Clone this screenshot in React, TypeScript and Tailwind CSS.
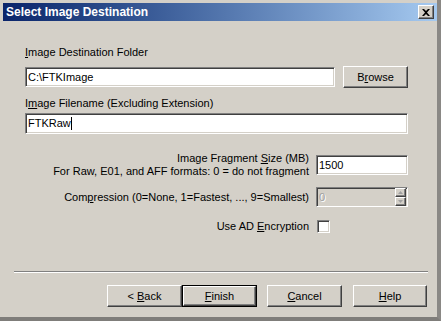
import React from 'react';

const sunken =
  'border border-t-[#808080] border-l-[#808080] border-r-white border-b-white shadow-[inset_1px_1px_0_#404040,inset_-1px_-1px_0_#d4d0c8]';

const raised =
  'border border-t-white border-l-white border-r-[#404040] border-b-[#404040] shadow-[inset_-1px_-1px_0_#808080]';

const U: React.FC<{ children: React.ReactNode }> = ({ children }) => (
  <span className="underline underline-offset-[1px]">{children}</span>
);

const WinButton: React.FC<{ children: React.ReactNode; isDefault?: boolean; w?: string }> = ({ children, isDefault, w = 'w-[75px]' }) => (
  <div className={`${w} h-[22px] ${isDefault ? 'border border-black' : ''} flex`}>
    <div className={`flex-1 ${raised} bg-[#d4d0c8] flex items-center justify-center text-black`}>
      <span className="whitespace-pre">{children}</span>
    </div>
  </div>
);

export default function App() {
  return (
    <div className="w-[441px] h-[321px] overflow-hidden bg-[#d4d0c8] border-r-[4px] border-b-[4px] border-r-[#8a8885] border-b-[#7f7d7a] flex flex-col font-['Liberation_Sans',Arial,sans-serif] text-[11px] leading-[13px] text-black">
      {/* Title bar */}
      <div className="mt-[3px] ml-[3px] h-[18px] flex items-center justify-between bg-gradient-to-r from-[#0a246a] to-[#a6caf0]">
        <span className="pl-[3px] font-bold text-white text-[12px]">Select Image Destination</span>
        <div className={`mr-[3px] w-[16px] h-[14px] ${raised} bg-[#d4d0c8] flex items-center justify-center`}>
          <svg width="8" height="7" viewBox="0 0 8 7">
            <path d="M0 0h2l2 2 2-2h2L5 3.5 8 7H6L4 5 2 7H0l3-3.5z" fill="#000" />
          </svg>
        </div>
      </div>

      {/* Body */}
      <div className="flex flex-col pl-[25px] pr-[29px]">
        <div className="mt-[25px]">
          <U>I</U>mage Destination Folder
        </div>
        <div className="mt-[7px] flex items-center">
          <div className={`w-[311px] h-[20px] bg-white ${sunken} flex items-center pl-[2px]`}>C:\FTKImage</div>
          <div className="ml-[8px]">
            <WinButton w="w-[65px]">
              B<U>r</U>owse
            </WinButton>
          </div>
        </div>
        <div className="mt-[9px]">
          I<U>m</U>age Filename (Excluding Extension)
        </div>
        <div className={`mt-[3px] h-[21px] bg-white ${sunken} flex items-center pl-[2px]`}>
          FTKRaw<span className="w-px h-[13px] bg-black" />
        </div>

        <div className="mt-[18px] flex items-start">
          <div className="flex-1 text-right">
            <div>
              Image Fragment <U>S</U>ize (MB)
            </div>
            <div>For Raw, E01, and AFF formats: 0 = do not fragment</div>
          </div>
          <div className={`ml-[7px] mt-[3px] w-[92px] h-[20px] bg-white ${sunken} flex items-center pl-[2px]`}>1500</div>
        </div>

        <div className="mt-[9px] flex items-center">
          <div className="flex-1 text-right">
            Com<U>p</U>ression (0=None, 1=Fastest, ..., 9=Smallest)
          </div>
          <div className={`ml-[7px] w-[92px] h-[20px] bg-[#d4d0c8] ${sunken} flex items-center justify-between pl-[2px] pr-[1px]`}>
            <span className="text-[#a0a0a0] [text-shadow:1px_1px_0_#fff]">0</span>
            <div className="flex flex-col w-[11px] h-[18px]">
              <div className={`h-[9px] ${raised} flex items-center justify-center`}>
                <svg width="5" height="3" viewBox="0 0 5 3"><path d="M2.5 0L5 3H0z" fill="#a0a0a0" /></svg>
              </div>
              <div className={`h-[9px] ${raised} flex items-center justify-center`}>
                <svg width="5" height="3" viewBox="0 0 5 3"><path d="M0 0h5L2.5 3z" fill="#a0a0a0" /></svg>
              </div>
            </div>
          </div>
        </div>

        <div className="mt-[13px] flex items-center">
          <div className="flex-1 text-right">
            Use AD <U>E</U>ncryption
          </div>
          <div className="ml-[7px] w-[92px] flex">
            <div className={`ml-[1px] w-[13px] h-[13px] bg-white ${sunken}`} />
          </div>
        </div>
      </div>

      {/* Separator */}
      <div className="mt-[38px] ml-[14px] mr-[9px] h-[2px] border-t border-t-[#808080] border-b border-b-white" />

      {/* Buttons */}
      <div className="mt-[12px] pl-[107px] flex">
        <WinButton>
          &lt; <U>B</U>ack
        </WinButton>
        <WinButton isDefault>
          <U>F</U>inish
        </WinButton>
        <div className="ml-[10px]">
          <WinButton>
            <U>C</U>ancel
          </WinButton>
        </div>
        <div className="ml-[11px]">
          <WinButton w="w-[74px]">
            <U>H</U>elp
          </WinButton>
        </div>
      </div>
    </div>
  );
}
